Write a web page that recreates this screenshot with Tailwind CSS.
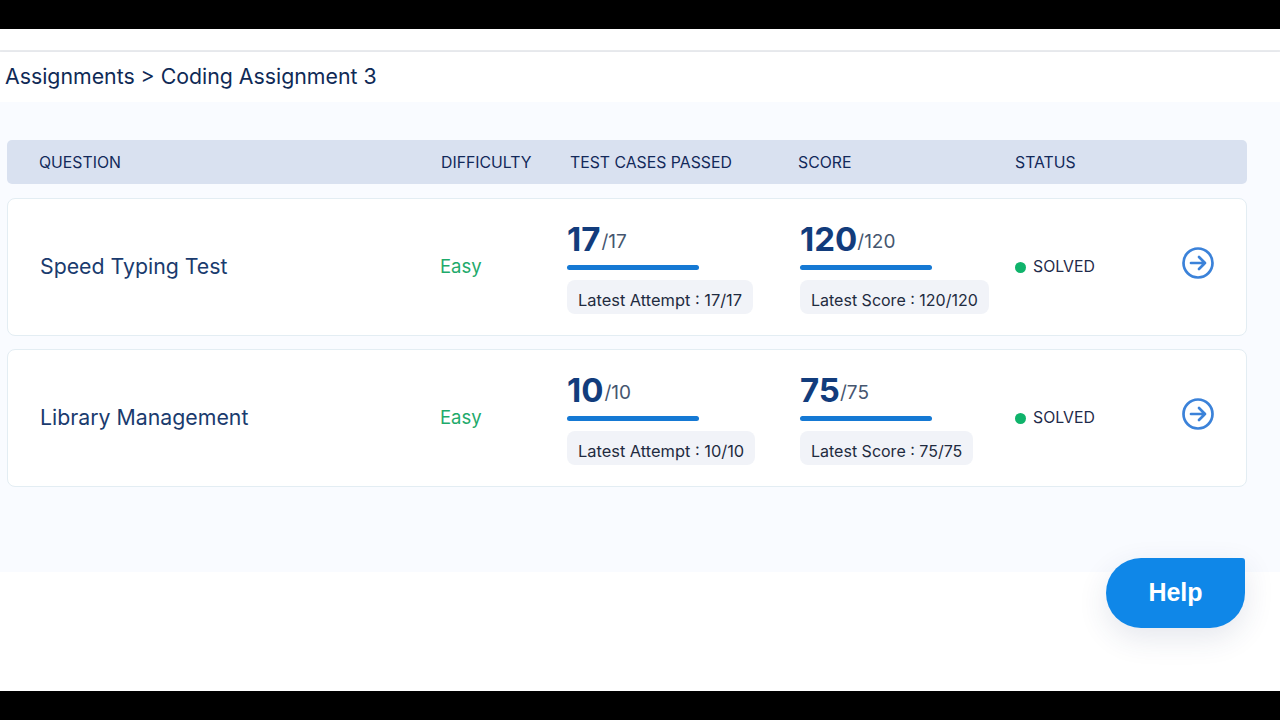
<!DOCTYPE html>
<html lang="en">
  <head>
    <meta charset="UTF-8" />
    <title>Coding Assignment 3</title>
    <script src="https://cdn.jsdelivr.net/npm/@tailwindcss/browser@4"></script>
  </head>
  <body class="bg-black h-[720px] overflow-hidden font-['Inter',sans-serif]">
    <div class="relative mt-[29px] h-[662px] bg-white flex flex-col">
      <div class="h-[21px] shrink-0 border-b-2 border-[#e9ebee] box-content"></div>
      <!-- Breadcrumb -->
      <div class="h-[50px] shrink-0 flex items-center pl-[5px] text-[21.3px] text-[#0f2a56] shadow-[0_1px_4px_rgba(30,50,90,0.05)]">
        Assignments &gt; Coding Assignment 3
      </div>
      <main class="h-[470px] shrink-0 bg-[#f9fbff] px-[7px] w-full pt-[38px]">
        <!-- Table header -->
        <div class="w-[1240px] h-[44px] pt-[1px] rounded-[5px] bg-[#d9e1f0] flex items-center text-[15.8px] text-[#12295a]">
          <div class="w-[434px] pl-[32px]">QUESTION</div>
          <div class="w-[129px]">DIFFICULTY</div>
          <div class="w-[228px]">TEST CASES PASSED</div>
          <div class="w-[217px]">SCORE</div>
          <div>STATUS</div>
        </div>

        <!-- Speed Typing Test -->
        <div class="w-[1240px] h-[138px] mt-[14px] rounded-[8px] bg-white border border-[#e3edf3] flex items-center">
          <div class="w-[432px] pl-[32px] text-[21.3px] text-[#1a3b6e]">Speed Typing Test</div>
          <div class="w-[127px] text-[18.5px] text-[#1eaa6b]">Easy</div>
          <div class="w-[233px] pt-[10px]">
            <div class="flex items-baseline h-[39px]">
              <span class="text-[33px] leading-[28px] font-bold text-[#123c7c]">17</span>
              <span class="text-[19px] leading-[28px] ml-[1px] -translate-y-[3px] text-[#46566f]">/17</span>
            </div>
            <div class="w-[132px] h-[5px] rounded-full bg-[#1579d4] mt-[1px]"></div>
            <div class="inline-block mt-[10px] h-[34px] px-[11px] rounded-[8px] bg-[#f1f3f8] text-[16.4px] leading-[40px] text-[#1f2b40] overflow-hidden">Latest Attempt : 17/17</div>
          </div>
          <div class="w-[215px] pt-[10px]">
            <div class="flex items-baseline h-[39px]">
              <span class="text-[33px] leading-[28px] font-bold text-[#123c7c]">120</span>
              <span class="text-[19px] leading-[28px] -translate-y-[3px] text-[#46566f]">/120</span>
            </div>
            <div class="w-[132px] h-[5px] rounded-full bg-[#1579d4] mt-[1px]"></div>
            <div class="inline-block mt-[10px] h-[34px] px-[11px] rounded-[8px] bg-[#f1f3f8] text-[16px] leading-[40px] text-[#1f2b40] overflow-hidden">Latest Score : 120/120</div>
          </div>
          <div class="w-[166px] flex items-center gap-[7px] text-[15.8px] text-[#1f2b4a]">
            <span class="w-[11px] h-[11px] rounded-full bg-[#0fb36b]"></span>SOLVED
          </div>
          <svg class="w-[34px] h-[34px] -mt-[8px]" viewBox="0 0 34 34" fill="none" stroke="#3b82d9" stroke-width="2.7" stroke-linecap="round" stroke-linejoin="round">
            <circle cx="17" cy="17" r="14.5" />
            <path d="M10 17h14M18 11l6 6-6 6" />
          </svg>
        </div>

        <!-- Library Management -->
        <div class="w-[1240px] h-[138px] mt-[13px] rounded-[8px] bg-white border border-[#e3edf3] flex items-center">
          <div class="w-[432px] pl-[32px] text-[21.3px] text-[#1a3b6e]">Library Management</div>
          <div class="w-[127px] text-[18.5px] text-[#1eaa6b]">Easy</div>
          <div class="w-[233px] pt-[10px]">
            <div class="flex items-baseline h-[39px]">
              <span class="text-[33px] leading-[28px] font-bold text-[#123c7c]">10</span>
              <span class="text-[19px] leading-[28px] ml-[1px] -translate-y-[3px] text-[#46566f]">/10</span>
            </div>
            <div class="w-[132px] h-[5px] rounded-full bg-[#1579d4] mt-[1px]"></div>
            <div class="inline-block mt-[10px] h-[34px] px-[11px] rounded-[8px] bg-[#f1f3f8] text-[16.4px] leading-[40px] text-[#1f2b40] overflow-hidden">Latest Attempt : 10/10</div>
          </div>
          <div class="w-[215px] pt-[10px]">
            <div class="flex items-baseline h-[39px]">
              <span class="text-[33px] leading-[28px] font-bold text-[#123c7c]">75</span>
              <span class="text-[19px] leading-[28px] -translate-y-[3px] text-[#46566f]">/75</span>
            </div>
            <div class="w-[132px] h-[5px] rounded-full bg-[#1579d4] mt-[1px]"></div>
            <div class="inline-block mt-[10px] h-[34px] px-[11px] rounded-[8px] bg-[#f1f3f8] text-[16px] leading-[40px] text-[#1f2b40] overflow-hidden">Latest Score : 75/75</div>
          </div>
          <div class="w-[166px] flex items-center gap-[7px] text-[15.8px] text-[#1f2b4a]">
            <span class="w-[11px] h-[11px] rounded-full bg-[#0fb36b]"></span>SOLVED
          </div>
          <svg class="w-[34px] h-[34px] -mt-[8px]" viewBox="0 0 34 34" fill="none" stroke="#3b82d9" stroke-width="2.7" stroke-linecap="round" stroke-linejoin="round">
            <circle cx="17" cy="17" r="14.5" />
            <path d="M10 17h14M18 11l6 6-6 6" />
          </svg>
        </div>
      </main>

      <!-- Help button floats over the page -->
      <button class="absolute left-[1106px] top-[529px] w-[139px] h-[70px] bg-[#0f87e8] text-white text-[25px] font-bold font-['Liberation_Sans',sans-serif] rounded-tl-[35px] rounded-bl-[35px] rounded-br-[35px] rounded-tr-[3px] shadow-[0_10px_30px_rgba(40,60,110,0.12)]">Help</button>
    </div>
  </body>
</html>
